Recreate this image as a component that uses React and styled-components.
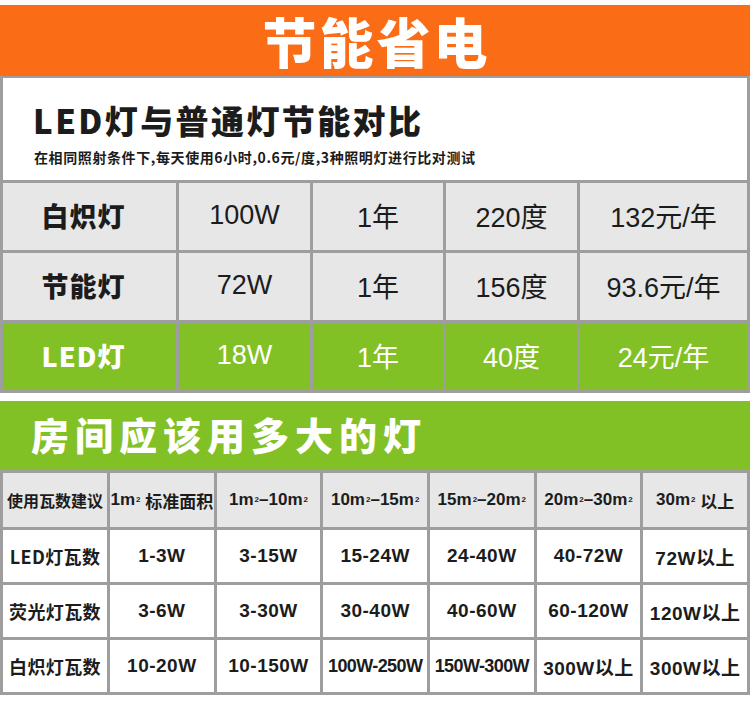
import React from "react";
import styled, { createGlobalStyle } from "styled-components";

const GlobalStyle = createGlobalStyle`
  html, body {
    margin: 0;
    padding: 0;
    background: #ffffff;
  }
  body {
    font-family: "Liberation Sans", "Noto Sans CJK SC", sans-serif;
  }
`;

const BORDER = "#9e9e9e";
const GREEN = "#82c126";
const ORANGE = "#fb6c17";
const CELL = "#e7e7e7";

const Page = styled.div`
  width: 750px;
  height: 708px;
  padding-top: 5px;
  box-sizing: border-box;
  background: #fff;
  overflow: hidden;
`;

const Banner = styled.div`
  height: 71px;
  background: ${ORANGE};
  display: flex;
  align-items: center;
  justify-content: center;
  color: #fff;
  font-family: "Noto Sans CJK SC", sans-serif;
  font-weight: 900;
  font-size: 54px;
  letter-spacing: 3px;
  padding-left: 3px;
`;

const Intro = styled.div`
  height: 104px;
  border: 3px solid ${BORDER};
  border-bottom: none;
  border-top-width: 2px;
  box-sizing: border-box;
  padding: 22px 0 0 30px;
  background: #fff;
`;

const IntroTitle = styled.h1`
  margin: 0;
  font-family: "Noto Sans CJK SC", sans-serif;
  font-weight: 900;
  font-size: 33px;
  line-height: 40px;
  letter-spacing: 2.4px;
  color: #1c1c1c;
`;

const IntroNote = styled.p`
  margin: 8px 0 0 1px;
  font-family: "Noto Sans CJK SC", sans-serif;
  font-weight: 700;
  font-size: 14px;
  line-height: 18px;
  letter-spacing: 0.6px;
  color: #1c1c1c;
`;

const CompareGrid = styled.div`
  display: grid;
  grid-template-columns: 173px 131px 130px 131px 167px;
  grid-auto-rows: 67px;
  gap: 3px;
  border: 3px solid ${BORDER};
  background: ${BORDER};
`;

const CompareCell = styled.div`
  display: flex;
  align-items: center;
  justify-content: center;
  background: ${(p) => (p.$green ? GREEN : CELL)};
  color: ${(p) => (p.$green ? "#fff" : "#1c1c1c")};
  font-family: ${(p) =>
    p.$label
      ? `"Noto Sans CJK SC", sans-serif`
      : `"Liberation Sans", "Noto Sans CJK SC", sans-serif`};
  font-weight: ${(p) => (p.$label ? 900 : 400)};
  font-size: 27px;
  letter-spacing: ${(p) => (p.$label ? "1px" : "0")};
  padding-right: ${(p) => (p.$label ? "12px" : "0")};
  padding-bottom: 2px;
`;

const SectionBar = styled.div`
  margin-top: 8px;
  height: 69px;
  background: ${GREEN};
  display: flex;
  align-items: center;
  padding-left: 31px;
  padding-bottom: 4px;
  box-sizing: border-box;
  color: #fff;
  font-family: "Noto Sans CJK SC", sans-serif;
  font-weight: 900;
  font-size: 38px;
  letter-spacing: 6px;
`;

const WattGrid = styled.div`
  display: grid;
  grid-template-columns: 104px repeat(6, 1fr);
  grid-template-rows: 54px 52px 52px 52px;
  gap: 3px;
  border: 3px solid ${BORDER};
  background: ${BORDER};
`;

const WattCell = styled.div`
  display: flex;
  align-items: center;
  justify-content: center;
  white-space: nowrap;
  background: ${(p) => (p.$head ? CELL : "#fff")};
  color: #1c1c1c;
  font-family: "Liberation Sans", "Noto Sans CJK SC", sans-serif;
  font-weight: 700;
  font-size: ${(p) => (p.$tight ? "18px" : p.$head ? "17px" : "19px")};
  letter-spacing: ${(p) => (p.$tight ? "-0.6px" : p.$head ? "0" : "0.5px")};

  sup {
    font-size: 8px;
    line-height: 0;
    vertical-align: 8px;
    margin-left: 1px;
  }
`;

const LabelCell = styled(WattCell)`
  font-family: "Noto Sans CJK SC", sans-serif;
  font-size: ${(p) => (p.$head ? "16px" : "18px")};
  letter-spacing: ${(p) => (p.$head ? "0" : "0.4px")};
`;

const compareRows = [
  { name: "白炽灯", cells: ["100W", "1年", "220度", "132元/年"] },
  { name: "节能灯", cells: ["72W", "1年", "156度", "93.6元/年"] },
  { name: "LED灯", cells: ["18W", "1年", "40度", "24元/年"], green: true },
];

const M2 = () => (
  <>
    m<sup>2</sup>
  </>
);

const headCells = [
  <>
    1<M2 />&nbsp;标准面积
  </>,
  <>
    1<M2 />–10<M2 />
  </>,
  <>
    10<M2 />–15<M2 />
  </>,
  <>
    15<M2 />–20<M2 />
  </>,
  <>
    20<M2 />–30<M2 />
  </>,
  <>
    30<M2 />&nbsp;以上
  </>,
];

const wattRows = [
  ["LED灯瓦数", "1-3W", "3-15W", "15-24W", "24-40W", "40-72W", "72W以上"],
  ["荧光灯瓦数", "3-6W", "3-30W", "30-40W", "40-60W", "60-120W", "120W以上"],
  ["白炽灯瓦数", "10-20W", "10-150W", "100W-250W", "150W-300W", "300W以上", "300W以上"],
];

const App = () => {
  return (
    <Page>
      <GlobalStyle />
      <Banner>节能省电</Banner>
      <Intro>
        <IntroTitle>LED灯与普通灯节能对比</IntroTitle>
        <IntroNote>
          在相同照射条件下,每天使用6小时,0.6元/度,3种照明灯进行比对测试
        </IntroNote>
      </Intro>
      <CompareGrid>
        {compareRows.map((row) => (
          <React.Fragment key={row.name}>
            <CompareCell $label $green={row.green}>
              {row.name}
            </CompareCell>
            {row.cells.map((c, i) => (
              <CompareCell key={i} $green={row.green}>
                {c}
              </CompareCell>
            ))}
          </React.Fragment>
        ))}
      </CompareGrid>
      <SectionBar>房间应该用多大的灯</SectionBar>
      <WattGrid>
        <LabelCell $head>使用瓦数建议</LabelCell>
        {headCells.map((c, i) => (
          <WattCell key={i} $head>
            {c}
          </WattCell>
        ))}
        {wattRows.map((row) => (
          <React.Fragment key={row[0]}>
            <LabelCell>{row[0]}</LabelCell>
            {row.slice(1).map((c, i) => (
              <WattCell key={i} $tight={c.length > 8}>
                {c}
              </WattCell>
            ))}
          </React.Fragment>
        ))}
      </WattGrid>
    </Page>
  );
};

export default App;
